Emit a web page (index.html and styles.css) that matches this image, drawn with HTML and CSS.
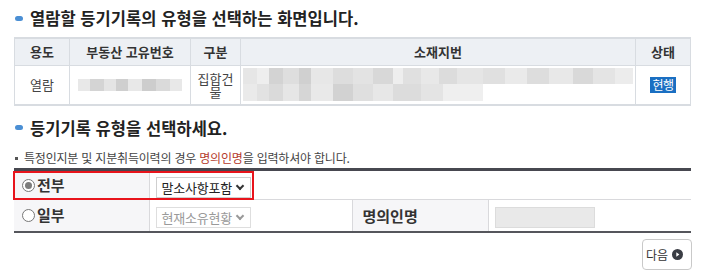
FILE: index.html
```html
<!DOCTYPE html>
<html lang="ko">
<head>
<meta charset="utf-8">
<link rel="stylesheet" href="styles.css">
</head>
<body>
<div class="page">
  <h2 class="title t1"><span class="dot"></span>열람할 등기기록의 유형을 선택하는 화면입니다.</h2>
  <table class="list">
    <thead>
      <tr>
        <th class="c1">용도</th>
        <th class="c2">부동산 고유번호</th>
        <th class="c3">구분</th>
        <th class="c4">소재지번</th>
        <th class="c5">상태</th>
      </tr>
    </thead>
    <tbody>
      <tr>
        <td>열람</td>
        <td><div class="blur blur-num"></div></td>
        <td class="wrap">집합건<br>물</td>
        <td><div class="blur blur-addr"><div class="b-row r1"></div><div class="b-row r2"></div></div></td>
        <td><span class="badge">현행</span></td>
      </tr>
    </tbody>
  </table>

  <h2 class="title t2"><span class="dot"></span>등기기록 유형을 선택하세요.</h2>
  <p class="note"><span class="sq"></span>특정인지분 및 지분취득이력의 경우 <em>명의인명</em>을 입력하셔야 합니다.</p>

  <table class="form">
    <tr class="row1">
      <th class="lab"><span class="hl"></span><span class="radio on"></span>전부</th>
      <td colspan="3" class="sel-cell"><span class="select">말소사항포함<span class="chev"></span></span></td>
    </tr>
    <tr class="row2">
      <th class="lab"><span class="radio"></span>일부</th>
      <td class="sel-cell"><span class="select dis">현재소유현황<span class="chev"></span></span></td>
      <th class="lab2">명의인명</th>
      <td class="inp-cell"><span class="inp"></span></td>
    </tr>
  </table>

  <div class="actions">
    <button class="next">다음<span class="ico"><svg width="11" height="11" viewBox="0 0 11 11"><circle cx="5.5" cy="5.5" r="5.5" fill="#3a3d44"/><path d="M4.3 3.2 L7.4 5.5 L4.3 7.8 Z" fill="#fff"/></svg></span></button>
  </div>
</div>
</body>
</html>
```
FILE: styles.css
```css
* { box-sizing: border-box; }
body { margin: 0; background: #fff; font-family: "Noto Sans CJK KR", "Noto Sans", sans-serif; color: #333; }
.page { padding: 0 13px 0 14px; width: 704px; }
.title {
  margin: 0; font-size: 16.5px; font-weight: 700; color: #222; letter-spacing: 0.05px;
  display: flex; align-items: center; line-height: 20px;
}
.t1 { height: 37px; padding-bottom: 1px; }
.title .dot {
  display: inline-block; width: 8px; height: 5px; border-radius: 3px;
  background: #4b8fd4; margin: 0 7px 0 1px;
}
.list { border-collapse: collapse; width: 677px; border-top: 2px solid #d8dce1; border-bottom: 2px solid #d8dce1; }
.list th, .list td { border-left: 1px solid #d8dce1; border-right: 1px solid #d8dce1; text-align: center; padding: 0; }
.list thead tr { height: 27px; }
.list tbody tr { height: 40px; }
.list th { background: #edf0f4; font-size: 13px; font-weight: 700; color: #333; border-bottom: 1px solid #d8dce1; line-height: 16px; }
.list td { font-size: 13px; color: #444; line-height: 15px; }
.list td.wrap { line-height: 13px; }
.c1 { width: 55px; } .c2 { width: 121px; } .c3 { width: 50px; } .c5 { width: 55px; }
.blur { margin: 0 auto; }
.blur-num {
  width: 104px; height: 12px;
  background: linear-gradient(90deg, #e8e8e8 0 12px, #d4d4d4 12px 26px, #e4e4e4 26px 38px, #cfcfcf 38px 50px, #e8e8e8 50px 64px, #cdcdcd 64px 78px, #dadada 78px 92px, #e8e8e8 92px 104px);
}
.blur-addr { width: 390px; height: 33px; margin-left: 2px; }
.b-row { height: 16px; }
.b-row.r1 { background: linear-gradient(90deg, #e6e6e6 0 14px, #eeeeee 14px 26px, #d3d3d3 26px 40px, #dedede 40px 56px, #d0d0d0 56px 68px, #e7e7e7 68px 90px, #dddddd 90px 110px, #e3e3e3 110px 130px, #d8d8d8 130px 150px, #eeeeee 150px 160px, #e0e0e0 160px 178px, #e8e8e8 178px 196px, #dcdcdc 196px 214px, #e5e5e5 214px 240px, #e0e0e0 240px 262px, #eaeaea 262px 284px, #dddddd 284px 306px, #e8e8e8 306px 330px, #d9d9d9 330px 350px, #e4e4e4 350px 372px, #ececec 372px 390px); }
.b-row.r2 { height: 17px; margin-right: 150px; background: linear-gradient(90deg, #eaeaea 0 14px, #e2e2e2 14px 26px, #dadada 26px 40px, #e6e6e6 40px 56px, #d6d6d6 56px 68px, #e9e9e9 68px 90px, #d2d2d2 90px 110px, #dfdfdf 110px 130px, #e7e7e7 130px 150px, #dcdcdc 150px 178px, #e4e4e4 178px 200px, #efefef 200px 240px); }
.badge { display: inline-block; background: #1a6fc2; color: #fff; font-size: 12px; line-height: 16px; padding: 0 2px; letter-spacing: -0.5px; }

.t2 { height: 41px; padding-top: 2px; }
.note {
  margin: 0; height: 21px; font-size: 12px; color: #444; letter-spacing: -0.2px; line-height: 21px; white-space: nowrap;
}
.note .sq { display: inline-block; width: 3px; height: 3px; background: #555; margin: 0 6px 0 1px; vertical-align: middle; position: relative; top: -1px; }
.note em { font-style: normal; color: #b5392b; }

.form { border-collapse: collapse; width: 677px; border-top: 3px solid #474850; border-bottom: 2px solid #55565c; }
.form th, .form td { padding: 0; text-align: left; white-space: nowrap; }
.form .lab { width: 135px; background: #f6f6f8; font-size: 15px; font-weight: 700; color: #333; border-right: 1px solid #d9d9dc; padding-left: 8px; position: relative; line-height: 18px; }
.row1 { height: 30px; }
.row1 th, .row1 td { border-bottom: 1px solid #d9d9dc; }
.row2 { height: 32px; }
.lab .radio { display: inline-block; width: 13px; height: 13px; border: 1px solid #777; border-radius: 50%; vertical-align: -1px; margin-right: 2px; position: relative; background: #fff; }
.lab .radio.on::after { content: ""; position: absolute; left: 2px; top: 2px; width: 7px; height: 7px; border-radius: 50%; background: #7c7c7c; }
.hl { position: absolute; left: -1px; top: 0px; width: 241px; height: 29px; border: 2px solid #e8141c; z-index: 2; }
.sel-cell { padding-left: 6px !important; }
.row2 .sel-cell { width: 203px; border-right: 1px solid #d9d9dc; }
.select {
  display: inline-flex; align-items: center; height: 21px; width: 95px; border: 1px solid #cfcfcf; background: #fff;
  font-size: 13px; color: #222; padding-left: 5px; letter-spacing: -0.2px; white-space: nowrap; vertical-align: middle;
}
.select.dis { color: #9a9a9a; border-color: #dedede; }
.chev { flex: none; width: 6px; height: 6px; border-right: 2px solid #333; border-bottom: 2px solid #333; transform: rotate(45deg); margin: -3px 0 0 5px; }
.select.dis .chev { border-color: #999; }
.lab2 { width: 136px; background: #f6f6f8; font-size: 15px; font-weight: 700; color: #333; padding-left: 10px !important; border-right: 1px solid #d9d9dc; }
.inp-cell { padding-left: 6px !important; }
.inp { display: inline-block; width: 100px; height: 21px; background: #e9e9e9; border: 1px solid #dcdcdc; vertical-align: middle; }

.actions { display: flex; justify-content: flex-end; padding-top: 6px; }
.next {
  height: 31px; width: 50px; border: 1px solid #c9c9c9; border-radius: 4px; background: #fff;
  font-family: inherit; font-size: 12px; color: #333; padding: 0 0 0 3px; display: flex; align-items: center; gap: 4px; margin-right: -1px;
}
.next .ico { display: flex; }
```
